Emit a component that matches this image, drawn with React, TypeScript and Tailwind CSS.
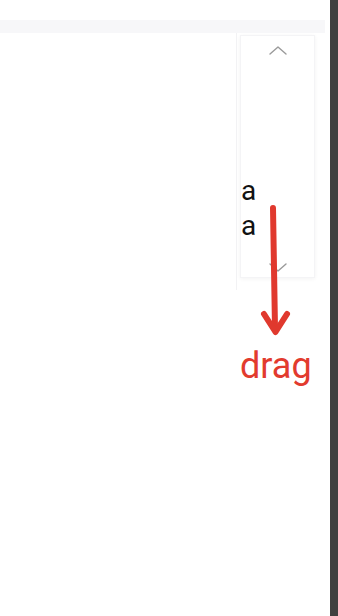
import React from "react";

function ChevronUp() {
  return (
    <svg width="18" height="9" viewBox="0 0 18 9" fill="none">
      <polyline points="1,8 9,1 17,8" stroke="#9a9a9a" strokeWidth="1.4" strokeLinecap="round" strokeLinejoin="round" />
    </svg>
  );
}

function ChevronDown() {
  return (
    <svg width="18" height="9" viewBox="0 0 18 9" fill="none">
      <polyline points="1,1 9,8 17,1" stroke="#9a9a9a" strokeWidth="1.4" strokeLinecap="round" strokeLinejoin="round" />
    </svg>
  );
}

export default function App() {
  const items = ["a", "a"];

  return (
    <div className="relative flex h-[616px] w-full bg-white font-['Roboto','Liberation_Sans',sans-serif]">
      {/* Page */}
      <div className="flex flex-1 flex-col pt-5">
        {/* Header band */}
        <div className="mr-[5px] h-[13px] bg-[#f7f7f9]" />

        <div className="flex">
          {/* Left panel */}
          <div className="h-[257px] w-[237px] border-r border-[#f2f2f4]" />

          {/* Picker column */}
          <div className="ml-[3px] mt-[2px] flex h-[243px] w-[75px] flex-col items-center border border-[#f4f4f6] shadow-[0_1px_4px_rgba(0,0,0,0.05)]">
            <div className="mt-[10px]">
              <ChevronUp />
            </div>
            <div className="flex-1" />
            <div className="self-start text-[28px] leading-[35px] text-[#111]">
              {items.map((item, index) => (
                <div key={index}>{item}</div>
              ))}
            </div>
            <div className="mb-[5px] mt-[20px]">
              <ChevronDown />
            </div>
          </div>
        </div>
      </div>

      {/* Scrollbar edge */}
      <div className="w-2 bg-[#404040]" />

      {/* Drag annotation */}
      <svg
        className="pointer-events-none absolute left-0 top-0"
        width="338"
        height="616"
        viewBox="0 0 338 616"
        fill="none"
      >
        <line x1="273" y1="208" x2="275" y2="328" stroke="#e0392e" strokeWidth="6" strokeLinecap="round" />
        <polyline points="264,314 275.5,332 287,314" stroke="#e0392e" strokeWidth="6" strokeLinecap="round" strokeLinejoin="round" />
      </svg>
      <div className="absolute left-[240px] top-[348px] text-[36px] leading-[36px] text-[#e23b2e]">
        drag
      </div>
    </div>
  );
}
